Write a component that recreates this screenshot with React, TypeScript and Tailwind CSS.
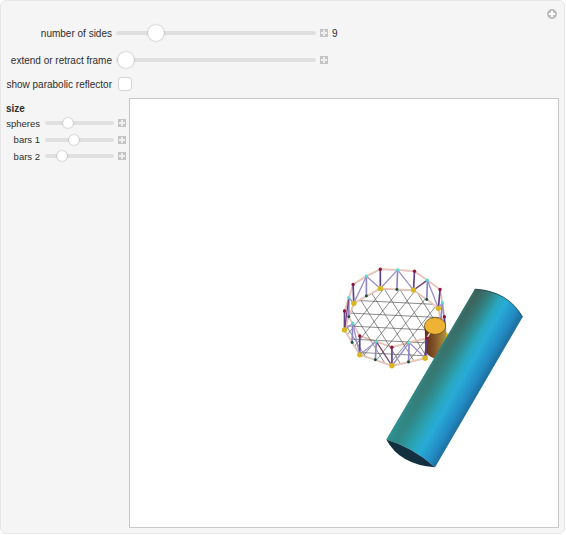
import React from "react";

const upper: [number, number][] = [[150,27],[202,29],[253,33],[292,60],[330,88],[337,128],[343,170],[318,200],[290,235],[237,248],[185,262],[138,245],[88,228],[67,190],[42,153],[55,113],[68,73],[108,48]];
const lower: [number, number][] = [[150,85],[200,88],[250,90],[290,118],[325,145],[332,185],[347,226],[312,262],[285,295],[235,307],[185,318],[135,300],[88,285],[65,248],[42,210],[55,170],[70,130],[108,108]];

const pts = (a: [number, number][], dx = 0, dy = 0) => a.map((p) => `${p[0] + dx},${p[1] + dy}`).join(" ");

function Lattice() {
  const lines: React.ReactNode[] = [];
  const cx = 190, cy = 205;
  const dirs: [number, number, number, number, number][] = [
    [1, 0.05, -0.05, 1, 0],
    [0.53, 0.85, 0.85, -0.53, 0],
    [-0.62, 0.78, 0.78, 0.62, 0.5],
  ];
  dirs.forEach(([dx, dy, nx, ny, off], d) => {
    for (let k = -5; k <= 5; k++) {
      const ox = cx + nx * (k + off) * 39;
      const oy = cy + ny * (k + off) * 39;
      lines.push(<line key={`${d}-${k}`} x1={ox - dx * 300} y1={oy - dy * 300} x2={ox + dx * 300} y2={oy + dy * 300} stroke="#4a4a4a" strokeWidth={1.9} />);
    }
  });
  return <g clipPath="url(#ring)">{lines}</g>;
}

function Frame({ only }: { only?: number[] }) {
  const n = upper.length;
  const show = (i: number) => !only || only.includes(i);
  return (
    <>
      {upper.map((p, i) => {
        if (!show(i)) return null;
        const q = lower[i];
        const a = lower[(i + 1) % n];
        const b = lower[(i + n - 1) % n];
        const odd = i % 2 === 1;
        return (
          <g key={i}>
            <line x1={p[0]} y1={p[1]} x2={q[0]} y2={q[1]} stroke={odd ? "#8f84c4" : "#5c3f86"} strokeWidth={5} />
            {odd && <line x1={p[0]} y1={p[1]} x2={a[0]} y2={a[1]} stroke="#9a90cc" strokeWidth={4} />}
            {odd && <line x1={p[0]} y1={p[1]} x2={b[0]} y2={b[1]} stroke={i % 4 === 3 ? "#7a3f70" : "#9a90cc"} strokeWidth={4} />}
          </g>
        );
      })}
      {upper.map((p, i) => show(i) && (
        <circle key={`u${i}`} cx={p[0]} cy={p[1]} r={5} fill={i % 2 === 0 ? "#8e0f3c" : "#5fd8d4"} />
      ))}
      {lower.map((p, i) => show(i) && (
        <circle key={`l${i}`} cx={p[0]} cy={p[1]} r={i % 2 === 0 ? 8 : 4.5} fill={i % 2 === 0 ? "#d8b81c" : "#14523c"} />
      ))}
    </>
  );
}

function Scene() {
  const side = "M475 289 Q508 291 523 317 L435 468 Q413 448 386 440 Z";
  return (
    <svg viewBox="129 98 429 430" className="w-full h-full block">
      <defs>
        <clipPath id="ring"><polygon points={pts(lower)} /></clipPath>
        <linearGradient id="big" gradientUnits="userSpaceOnUse" x1="386" y1="440" x2="435" y2="468">
          <stop offset="0" stopColor="#2a9a9a" />
          <stop offset="0.18" stopColor="#2d9090" />
          <stop offset="0.4" stopColor="#2aa2ae" />
          <stop offset="0.64" stopColor="#28abd6" />
          <stop offset="0.86" stopColor="#228cc4" />
          <stop offset="1" stopColor="#1e70a0" />
        </linearGradient>
        <linearGradient id="darkAlong" gradientUnits="userSpaceOnUse" x1="475" y1="289" x2="395" y2="430">
          <stop offset="0" stopColor="#3f5a52" stopOpacity="0.9" />
          <stop offset="0.7" stopColor="#3e6a62" stopOpacity="0.6" />
          <stop offset="1" stopColor="#3e6a62" stopOpacity="0.25" />
        </linearGradient>
        <linearGradient id="acrossMask" gradientUnits="userSpaceOnUse" x1="386" y1="440" x2="435" y2="468">
          <stop offset="0" stopColor="#888" />
          <stop offset="0.1" stopColor="#fff" />
          <stop offset="0.5" stopColor="#000" />
        </linearGradient>
        <mask id="darkMask" maskUnits="userSpaceOnUse" x="370" y="280" width="170" height="200">
          <rect x="370" y="280" width="170" height="200" fill="url(#acrossMask)" />
        </mask>
        <linearGradient id="small" x1="0" y1="0" x2="1" y2="0">
          <stop offset="0" stopColor="#5e2c14" />
          <stop offset="0.5" stopColor="#86582a" />
          <stop offset="1" stopColor="#a8963f" />
        </linearGradient>
      </defs>
      <g transform="translate(330 260) scale(0.3333)">
        <polygon points={pts(upper)} fill="none" stroke="#f0c6ac" strokeWidth={5.5} />
        <polygon points={pts(upper, 1, 1.5)} fill="none" stroke="#c9c2e4" strokeWidth={1.6} />
        <Lattice />
        <polygon points={pts(lower)} fill="none" stroke="#f0c6ac" strokeWidth={5.5} />
        <polygon points={pts(lower, 1, 1.5)} fill="none" stroke="#c9c2e4" strokeWidth={1.6} />
        <Frame />
      </g>
      <path d="M424.5 326 L425.5 352 Q432 362 446 358 L446 326 Z" fill="url(#small)" />
      <ellipse cx={435} cy={326} rx={10.7} ry={8.5} fill="#eeb234" stroke="#4a3410" strokeWidth={0.6} />
      <g transform="translate(330 260) scale(0.3333)">
        <polyline points="290,235 237,248" fill="none" stroke="#f0c6ac" strokeWidth={4} />
        <polyline points="290,235 299,220" fill="none" stroke="#f0e8f4" strokeWidth={4} />
        <Frame only={[8]} />
      </g>
      <path d={side} fill="url(#big)" />
      <path d={side} fill="url(#darkAlong)" mask="url(#darkMask)" />
      <path d="M475 289 Q508 291 523 317" fill="none" stroke="#1d3f4e" strokeWidth={0.8} />
      <path d="M386 440 Q413 448 435 468 Q399 465 386 440 Z" fill="#12303f" />
    </svg>
  );
}

function Plus() {
  return (
    <span className="relative flex w-[8px] h-[8px] shrink-0 items-center justify-center bg-[#c4c4c4]">
      <span className="absolute w-[6px] h-[2px] bg-[#efefef]" />
      <span className="absolute w-[2px] h-[6px] bg-[#efefef]" />
    </span>
  );
}

function Slider({ width, pos, size }: { width: string; pos: number; size: "lg" | "sm" }) {
  const knob = size === "lg"
    ? "w-[16px] h-[16px] -top-[6px]"
    : "w-[10px] h-[10px] -top-[3px]";
  const half = size === "lg" ? 8 : 5;
  return (
    <div className={`relative h-[4px] rounded-full bg-[#e0e0e0] ${width}`}>
      <div
        className={`absolute rounded-full bg-white shadow-[0_0_2px_rgba(0,0,0,0.35)] ${knob}`}
        style={{ left: pos - half }}
      />
    </div>
  );
}

function TopRow({ label, pos, value }: { label: string; pos: number; value?: string }) {
  return (
    <div className="flex items-center h-[16px]">
      <span className="w-[108px] pt-[1px] text-right whitespace-nowrap">{label}</span>
      <div className="w-[4px]" />
      <Slider width="w-[200px]" pos={pos} size="lg" />
      <div className="w-[4px]" />
      <Plus />
      {value && <span className="ml-[4px] pt-[1px]">{value}</span>}
    </div>
  );
}

function SizeRow({ label, pos }: { label: string; pos: number }) {
  return (
    <div className="flex items-center h-[16px]">
      <span className="w-[36px] pt-[1px] text-right whitespace-nowrap text-[9.5px]">{label}</span>
      <div className="w-[5px]" />
      <Slider width="w-[69px]" pos={pos} size="sm" />
      <div className="w-[4px]" />
      <Plus />
    </div>
  );
}

export default function App() {
  return (
    <div className="relative w-[566px] h-[535px] bg-white overflow-hidden text-[10px] leading-none text-[#2e2e2e] [font-family:'Liberation_Sans',Arial,sans-serif]">
      <div className="relative w-[565px] h-[534px] rounded-[6px] border border-[#e6e6e6] bg-[#f5f5f5] pt-[24px] pl-[3px]">
        <span className="absolute top-[8px] right-[7px] flex w-[10px] h-[10px] items-center justify-center rounded-full bg-[#bdbdbd]">
          <span className="absolute w-[6px] h-[2px] bg-white" />
          <span className="absolute w-[2px] h-[6px] bg-white" />
        </span>
        <div className="flex flex-col gap-[11px]">
          <TopRow label="number of sides" pos={40} value="9" />
          <TopRow label="extend or retract frame" pos={10} />
        </div>
        <div className="flex items-center mt-[8px] h-[16px]">
          <span className="w-[108px] pt-[1px] text-right whitespace-nowrap">show parabolic reflector</span>
          <span className="ml-[6px] w-[14px] h-[14px] rounded-[3px] border border-[#d4d4d4] bg-white" />
        </div>
        <div className="flex mt-[6px]">
          <div className="w-[125px] shrink-0 pt-[3px]">
            <div className="font-bold h-[14px] pt-[1px] flex items-center ml-[2px]">size</div>
            <div className="flex flex-col gap-[0.5px]">
              <SizeRow label="spheres" pos={23} />
              <SizeRow label="bars 1" pos={29} />
              <SizeRow label="bars 2" pos={17} />
            </div>
          </div>
          <div className="w-[430px] h-[430px] shrink-0 bg-white border border-[#c8c8c8]">
            <Scene />
          </div>
        </div>
      </div>
    </div>
  );
}
